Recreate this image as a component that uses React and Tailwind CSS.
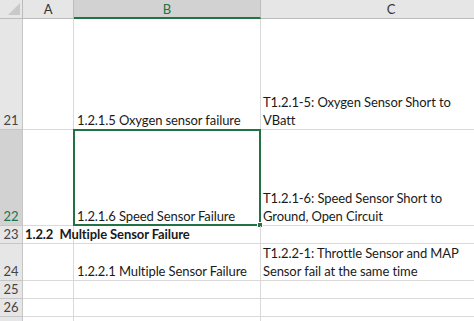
import React from "react";

const rows = [
  { n: "21", h: 111, b: "1.2.1.5 Oxygen sensor failure", c: ["T1.2.1-5: Oxygen Sensor Short to", "VBatt"] },
  { n: "22", h: 96, b: "1.2.1.6 Speed Sensor Failure", c: ["T1.2.1-6: Speed Sensor Short to", "Ground, Open Circuit"], sel: true },
  { n: "23", h: 18, a: "1.2.2  Multiple Sensor Failure" },
  { n: "24", h: 37, b: "1.2.2.1 Multiple Sensor Failure", c: ["T1.2.2-1: Throttle Sensor and MAP", "Sensor fail at the same time"] },
  { n: "25", h: 18 },
  { n: "26", h: 18 },
  { n: "", h: 18 },
];

export default function App(){
  return (
    <div className="w-[474px] h-[321px] overflow-hidden bg-white text-[13px] leading-[18px] tracking-[-0.1px] text-[#1a1a1a]" style={{ fontFamily: "Lato, 'Liberation Sans', sans-serif" }}>
      <div className="grid grid-cols-[23px_51px_187px_260px]">
        {/* header */}
        <div className="h-[19px] bg-[#e6e6e6] border-r border-b border-[#bcbcbc] relative">
          <div className="absolute right-[2px] bottom-[3px] w-0 h-0 border-l-[12px] border-l-transparent border-b-[12px] border-b-[#c8c8c8]"></div>
        </div>
        <div className="h-[19px] bg-[#e6e6e6] border-r border-b border-[#bcbcbc] flex items-center justify-center text-[13px] text-[#333]">A</div>
        <div className="h-[19px] bg-[#d2d2d2] border-r border-[#bcbcbc] border-b-2 border-b-[#217346] flex items-center justify-center text-[13px] text-[#217346]">B</div>
        <div className="h-[19px] bg-[#e6e6e6] border-b border-[#bcbcbc] flex items-center justify-center text-[13px] text-[#333]">C</div>

        {rows.map((r, i) => (
          <React.Fragment key={i}>
            <div style={{ height: r.h }} className={"border-r border-b border-[#c6c6c6] flex items-end justify-center text-[13px] " + (r.sel ? "bg-[#d2d2d2] text-[#217346]" : "bg-[#e6e6e6] text-[#444]")}>
              {r.n}
            </div>
            <div className="border-r border-b border-[#d9d9d9] flex items-end relative">
              {r.a && <span className="absolute left-[2px] bottom-0 whitespace-pre font-bold">{r.a}</span>}
            </div>
            <div className="border-r border-b border-[#d9d9d9] flex items-end pl-[3px] relative whitespace-nowrap">
              {r.b}
              {r.sel && (
                <div className="absolute -left-[1px] -top-[1px] -right-[1px] -bottom-[1px] border-2 border-[#217346]">
                  <div className="absolute -right-[4px] -bottom-[4px] w-[6px] h-[6px] bg-[#217346] border border-white"></div>
                </div>
              )}
            </div>
            <div className="border-b border-[#d9d9d9] flex flex-col justify-end pl-[2px] whitespace-nowrap">
              {r.c && r.c.map(t => <div key={t}>{t}</div>)}
            </div>
          </React.Fragment>
        ))}
      </div>
    </div>
  );
}
